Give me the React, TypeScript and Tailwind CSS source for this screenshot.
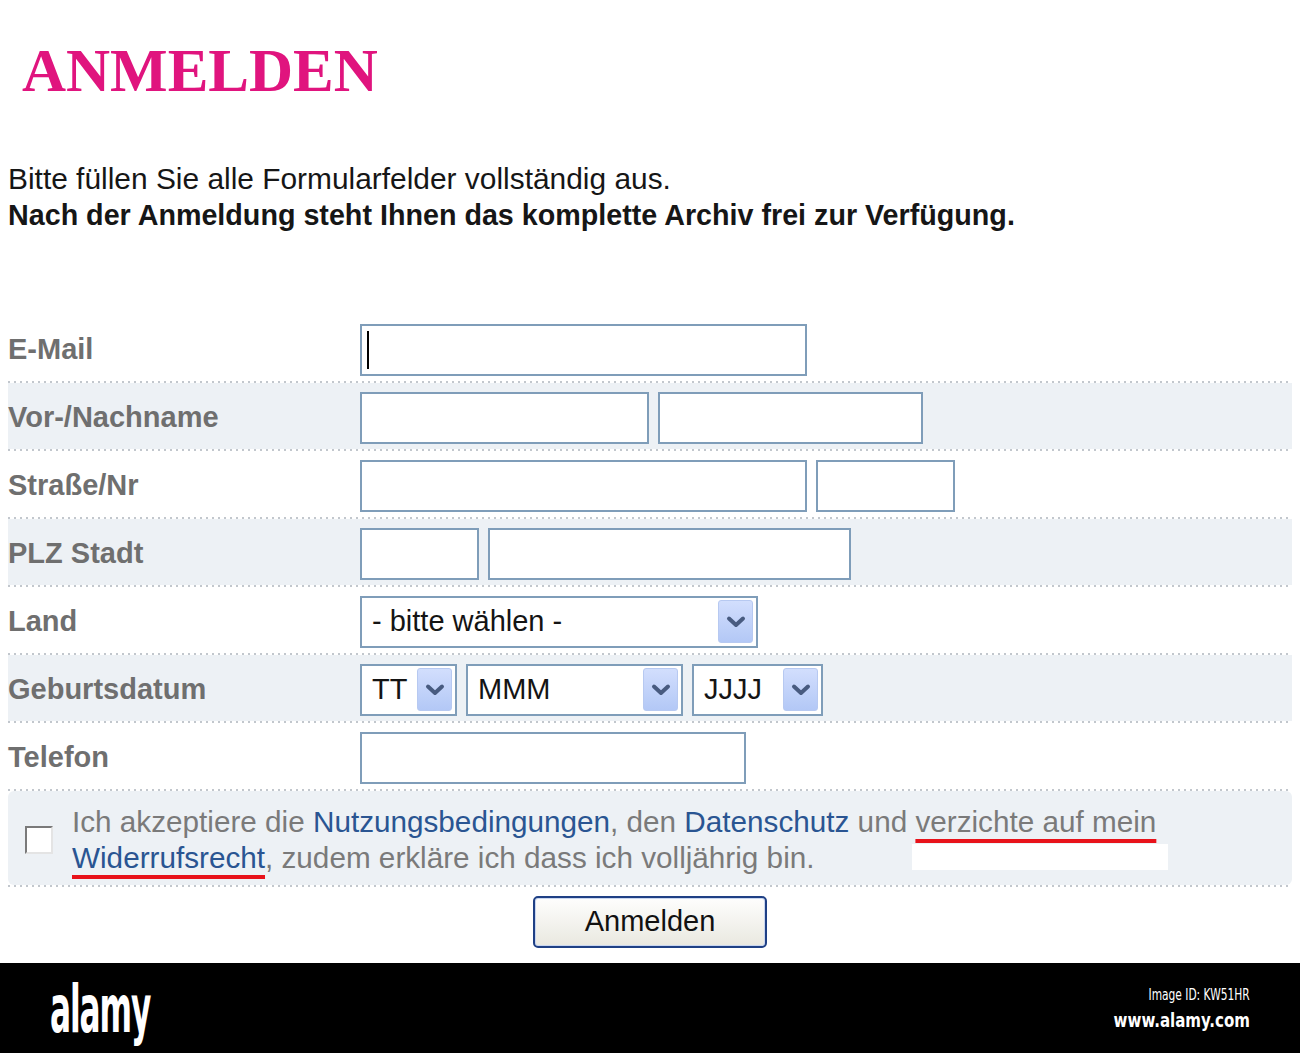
import type { ReactNode } from 'react'

const sans = { fontFamily: '"Liberation Sans", Arial, sans-serif' }

function Sep() {
  return <div className="h-[2px] w-full bg-[repeating-linear-gradient(90deg,#c2c7cd_0_2px,transparent_2px_6px)]" />
}

function Row({ label, shaded, children }: { label: string; shaded?: boolean; children: ReactNode }) {
  return (
    <div className={`flex h-[66px] items-center pt-[3px] ${shaded ? 'bg-[#edf1f5]' : ''}`}>
      <div className="w-[352px] shrink-0 text-[29px] font-bold text-[#6f6f6f]">{label}</div>
      <div className="flex items-center gap-[9px]">{children}</div>
    </div>
  )
}

function Field({ w, cursor }: { w: string; cursor?: boolean }) {
  return (
    <div className={`${w} flex h-[52px] items-center border-2 border-[#7f9db9] bg-white pl-[5px]`}>
      {cursor && <span className="h-[38px] w-[2px] bg-black" />}
    </div>
  )
}

function Chevron() {
  return (
    <svg width="20" height="14" viewBox="0 0 20 14" fill="none" stroke="#485b80" strokeWidth="4" strokeLinecap="round" strokeLinejoin="round">
      <polyline points="3,3.5 10,10 17,3.5" />
    </svg>
  )
}

function Select({ w, text }: { w: string; text: string }) {
  return (
    <div className={`${w} flex h-[52px] items-center justify-between border-2 border-[#7f9db9] bg-white pr-[3px] pl-[10px]`}>
      <span className="text-[29px] text-[#141414]">{text}</span>
      <span className="flex h-[43px] w-[35px] items-center justify-center rounded-[3px] border border-[#b7c9f1] bg-[linear-gradient(#d2defd,#b3c8f6)]">
        <Chevron />
      </span>
    </div>
  )
}

export default function App() {
  return (
    <div className="flex h-[1053px] flex-col bg-white" style={sans}>
      <div className="flex-1 px-2">
        <h1
          className="mt-[41px] ml-[14px] text-[61px] leading-[60px] font-bold text-[#e0147e]"
          style={{ fontFamily: '"Liberation Serif", "Times New Roman", serif' }}
        >
          ANMELDEN
        </h1>

        <div className="mt-[60px] leading-[36px] text-[#161616]">
          <p className="text-[29.9px]">Bitte füllen Sie alle Formularfelder vollständig aus.</p>
          <p className="text-[28.7px] font-bold">Nach der Anmeldung steht Ihnen das komplette Archiv frei zur Verfügung.</p>
        </div>

        <div className="mt-[82px]">
          <Row label="E-Mail">
            <Field w="w-[447px]" cursor />
          </Row>
          <Sep />
          <Row label="Vor-/Nachname" shaded>
            <Field w="w-[289px]" />
            <Field w="w-[265px]" />
          </Row>
          <Sep />
          <Row label="Straße/Nr">
            <Field w="w-[447px]" />
            <Field w="w-[139px]" />
          </Row>
          <Sep />
          <Row label="PLZ Stadt" shaded>
            <Field w="w-[119px]" />
            <Field w="w-[363px]" />
          </Row>
          <Sep />
          <Row label="Land">
            <Select w="w-[398px]" text="- bitte wählen -" />
          </Row>
          <Sep />
          <Row label="Geburtsdatum" shaded>
            <Select w="w-[97px]" text="TT" />
            <Select w="w-[217px]" text="MMM" />
            <Select w="w-[131px]" text="JJJJ" />
          </Row>
          <Sep />
          <Row label="Telefon">
            <Field w="w-[386px]" />
          </Row>
          <Sep />

          <div className="relative flex h-[94px] items-center rounded-[6px] bg-[#edf1f5] pt-[4px] pl-[17px]">
            <span className="h-[28px] w-[28px] shrink-0 border-2 border-t-[#7a7a7a] border-r-[#e4e4e4] border-b-[#e4e4e4] border-l-[#7a7a7a] bg-white" />
            <p className="ml-[19px] w-[1200px] text-[29.7px] leading-[36px] text-[#7a7a7a]">
              Ich akzeptiere die <span className="text-[#2a5592]">Nutzungsbedingungen</span>, den{' '}
              <span className="text-[#2a5592]">Datenschutz</span> und{' '}
              <span className="underline decoration-[#e8121a] decoration-4 underline-offset-[7px]">verzichte auf mein</span>{' '}
              <span className="text-[#2a5592] underline decoration-[#e8121a] decoration-4 underline-offset-[7px]">Widerrufsrecht</span>, zudem erkläre ich dass ich volljährig bin.
            </p>
            <span className="absolute top-[53px] left-[904px] h-[26px] w-[256px] bg-white" />
          </div>
          <Sep />
        </div>

        <div className="mt-[9px] flex justify-center">
          <button className="h-[52px] w-[234px] rounded-[5px] border-2 border-[#1f4085] bg-[linear-gradient(#fefefd,#e9e8e0)] text-[29px] text-[#111] shadow-[inset_0_0_0_1px_#c9d6f0]">
            Anmelden
          </button>
        </div>
      </div>

      <div
        className="flex h-[90px] items-center justify-between bg-black pr-[50px] pl-[50px] text-white"
        style={{ fontFamily: '"DejaVu Sans", sans-serif', fontStretch: 'condensed' }}
      >
        <span className="mt-[4px] inline-block origin-left scale-x-[0.56] scale-y-[1.05] text-[62px] leading-none font-bold tracking-[-2px]">alamy</span>
        <div className="flex flex-col items-end gap-[4px]">
          <span className="origin-right scale-x-[0.74] text-[16px] leading-[20px]">Image ID: KW51HR</span>
          <span className="origin-right scale-x-[0.88] text-[19px] leading-[22px] font-bold">www.alamy.com</span>
        </div>
      </div>
    </div>
  )
}
